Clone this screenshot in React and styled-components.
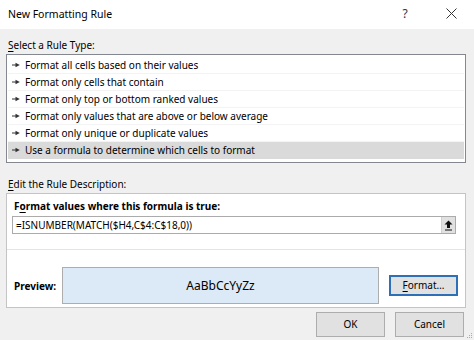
import React from "react";
import styled, { createGlobalStyle } from "styled-components";

const Global = createGlobalStyle`
  html, body { margin: 0; padding: 0; background: #fff; }
  body { font-family: "Segoe UI", "Noto Sans", "DejaVu Sans", sans-serif; font-size: 10px; color: #000; }
  * { box-sizing: border-box; }
`;

const Window = styled.div`
  width: 474px;
  height: 340px;
  background: #f0f0f0;
  display: flex;
  flex-direction: column;
  position: relative;
  overflow: hidden;
`;

const TitleBar = styled.div`
  height: 29px;
  background: #fff;
  display: flex;
  align-items: center;
  padding-left: 8px;
`;

const Title = styled.div`
  flex: 1;
  font-size: 10.5px;
  padding-bottom: 2px;
`;

const TitleButton = styled.div`
  width: 46px;
  height: 29px;
  display: flex;
  align-items: center;
  justify-content: center;
  font-size: 12px;
  color: #333;
  padding-bottom: 3px;
`;

const Body = styled.div`
  flex: 1;
  display: flex;
  flex-direction: column;
  padding: 0 8px 0 6px;
`;

const SectionLabel = styled.div`
  height: 16px;
  line-height: 16px;
  margin-top: ${(p) => p.$top}px;
  padding-left: 2px;
  u { text-decoration: underline; text-underline-offset: 2px; }
`;

const ListBox = styled.div`
  margin-top: 1px;
  height: 109px;
  border: 1px solid #828790;
  background: #fff;
  padding: 2px 1px;
  display: flex;
  flex-direction: column;
`;

const Row = styled.div`
  height: 17px;
  display: flex;
  align-items: center;
  gap: 5px;
  padding-left: 4px;
  background: ${(p) => (p.$selected ? "#dadada" : "#fff")};
  border-bottom: 1px solid ${(p) => (p.$selected ? "#dadada" : "#f3f3f3")};
  white-space: nowrap;
`;

const Arrow = () => (
  <svg width="8" height="6" viewBox="0 0 8 6">
    <path d="M0 3 H4" stroke="#333" strokeWidth="1" />
    <path d="M3.5 0.7 L7.8 3 L3.5 5.3 Z" fill="#333" />
  </svg>
);

const DescPanel = styled.div`
  margin-top: 1px;
  height: 115px;
  border: 1px solid #c4c4c4;
  background: #fff;
  display: flex;
  flex-direction: column;
`;

const BoldLabel = styled.div`
  font-weight: 700;
  padding: 4px 0 0 7px;
  height: 22px;
  line-height: 16px;
  u { text-decoration: underline; text-underline-offset: 2px; }
`;

const InputBox = styled.div`
  margin: 0 9px 0 5px;
  height: 18px;
  border: 1px solid #ababab;
  display: flex;
  align-items: center;
  padding-left: 3px;
`;

const InputText = styled.div`
  flex: 1;
  line-height: 16px;
`;

const RefButton = styled.div`
  width: 14px;
  height: 16px;
  background: #e1e1e1;
  border-left: 1px solid #d0d0d0;
  display: flex;
  align-items: center;
  justify-content: center;
`;

const Separator = styled.div`
  margin-top: 15px;
  height: 1px;
  background: #e3e3e3;
`;

const PreviewRow = styled.div`
  margin-top: 17px;
  display: flex;
  align-items: center;
  padding-left: 7px;
`;

const PreviewLabel = styled.div`
  font-weight: 700;
  width: 48px;
  white-space: nowrap;
`;

const PreviewBox = styled.div`
  width: 317px;
  height: 37px;
  background: #dce9f6;
  border: 1px solid #adadad;
  display: flex;
  align-items: center;
  justify-content: center;
  font-size: 12px;
  padding-bottom: 1px;
`;

const Button = styled.div`
  width: ${(p) => p.$w}px;
  height: ${(p) => p.$h}px;
  background: #e1e1e1;
  border: ${(p) => (p.$default ? "2px solid #2f6fb7" : "1px solid #adadad")};
  display: flex;
  align-items: center;
  justify-content: center;
  font-size: 10px;
  padding-bottom: 1px;
  u { text-decoration: underline; text-underline-offset: 2px; }
`;

const FormatButton = styled(Button)`
  margin-left: 10px;
`;

const Footer = styled.div`
  display: flex;
  justify-content: flex-end;
  gap: 10px;
  padding-top: 4px;
  padding-right: 2px;
`;

const Grip = styled.svg`
  position: absolute;
  right: 1px;
  bottom: 1px;
`;

const rules = [
  "Format all cells based on their values",
  "Format only cells that contain",
  "Format only top or bottom ranked values",
  "Format only values that are above or below average",
  "Format only unique or duplicate values",
  "Use a formula to determine which cells to format",
];

export default function App() {
  return (
    <>
      <Global />
      <Window>
        <TitleBar>
          <Title>New Formatting Rule</Title>
          <TitleButton>?</TitleButton>
          <TitleButton>
            <svg width="11" height="11" viewBox="0 0 11 11">
              <path d="M0.5 0.5 L10.5 10.5 M10.5 0.5 L0.5 10.5" stroke="#333" strokeWidth="1" />
            </svg>
          </TitleButton>
        </TitleBar>
        <Body>
          <SectionLabel $top={8}>
            <u>S</u>elect a Rule Type:
          </SectionLabel>
          <ListBox>
            {rules.map((r, i) => (
              <Row key={r} $selected={i === rules.length - 1}>
                <Arrow />
                <span>{r}</span>
              </Row>
            ))}
          </ListBox>
          <SectionLabel $top={13}>
            <u>E</u>dit the Rule Description:
          </SectionLabel>
          <DescPanel>
            <BoldLabel>
              F<u>o</u>rmat values where this formula is true:
            </BoldLabel>
            <InputBox>
              <InputText>=ISNUMBER(MATCH($H4,C$4:C$18,0))</InputText>
              <RefButton>
                <svg width="9" height="11" viewBox="0 0 9 11">
                  <path d="M4.5 0.5 L8.5 4.5 H6 V8 H3 V4.5 H0.5 Z" fill="#111" />
                  <path d="M1 10 H8" stroke="#111" strokeWidth="1" />
                </svg>
              </RefButton>
            </InputBox>
            <Separator />
            <PreviewRow>
              <PreviewLabel>Preview:</PreviewLabel>
              <PreviewBox>AaBbCcYyZz</PreviewBox>
              <FormatButton $w={69} $h={21} $default>
                <u>F</u>ormat…
              </FormatButton>
            </PreviewRow>
          </DescPanel>
          <Footer>
            <Button $w={69} $h={25}>OK</Button>
            <Button $w={69} $h={25}>Cancel</Button>
          </Footer>
        </Body>
        <Grip width="6" height="6" viewBox="0 0 6 6">
          <rect x="4" y="0" width="1" height="1" fill="#aaa" />
          <rect x="2" y="2" width="1" height="1" fill="#aaa" />
          <rect x="4" y="2" width="1" height="1" fill="#aaa" />
          <rect x="0" y="4" width="1" height="1" fill="#aaa" />
          <rect x="2" y="4" width="1" height="1" fill="#aaa" />
          <rect x="4" y="4" width="1" height="1" fill="#aaa" />
        </Grip>
      </Window>
    </>
  );
}
